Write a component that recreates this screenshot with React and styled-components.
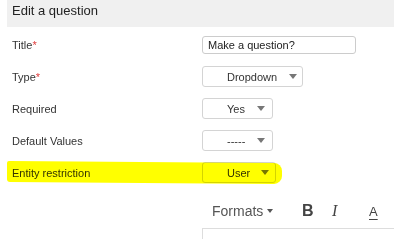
import React from 'react';
import styled, { createGlobalStyle } from 'styled-components';

const Global = createGlobalStyle`
  body {
    margin: 0;
    background: #fff;
    font-family: "Liberation Sans", Arial, sans-serif;
    color: #333;
  }
`;

const Page = styled.div`
  width: 394px;
  height: 239px;
  overflow: hidden;
  padding-left: 7px;
  box-sizing: border-box;
`;

const Header = styled.div`
  height: 27px;
  background: #f0f0f0;
  padding: 4px 5px 0;
  box-sizing: border-box;
  font-size: 13px;
  line-height: 14px;
  color: #222;
`;

const Form = styled.div`
  display: flex;
  flex-direction: column;
  gap: 11px;
  padding: 7px 0 0 5px;
`;

const Row = styled.div`
  position: relative;
  display: grid;
  grid-template-columns: 190px auto;
  align-items: center;
  height: 21px;
`;

const Label = styled.div`
  font-size: 11px;
  color: #333;
`;

const Req = styled.span`
  color: #e03b3b;
`;

const Input = styled.div`
  width: 154px;
  height: 18px;
  box-sizing: border-box;
  border: 1px solid #ccc;
  border-radius: 3px;
  padding: 0 5px;
  font-size: 11px;
  line-height: 16px;
  color: #222;
`;

const Select = styled.div`
  justify-self: start;
  display: inline-flex;
  align-items: center;
  width: ${p => p.w}px;
  height: 21px;
  box-sizing: border-box;
  border: 1px solid #d4d4d4;
  border-radius: 3px;
  padding-left: 24px;
  font-size: 11px;
  color: #333;
`;

const Arrow = styled.span`
  margin-left: ${p => p.gap || 12}px;
  width: 0;
  height: 0;
  border-left: 4px solid transparent;
  border-right: 4px solid transparent;
  border-top: 5px solid #777;
`;

const Highlight = styled.div`
  position: absolute;
  left: -5px;
  top: 0;
  width: 275px;
  height: 21px;
  background: #ffff00;
  mix-blend-mode: multiply;
  border-radius: 2px 8px 8px 3px;
  transform: skewY(0.4deg);
  pointer-events: none;
`;

const Toolbar = styled.div`
  display: flex;
  align-items: center;
  height: 30px;
  margin: 13px 0 0 195px;
  padding-left: 10px;
  color: #555;
`;

const Formats = styled.div`
  display: flex;
  align-items: center;
  font-size: 14px;
  gap: 4px;
  width: 90px;
`;

const Caret = styled.span`
  width: 0;
  height: 0;
  border-left: 3px solid transparent;
  border-right: 3px solid transparent;
  border-top: 4px solid #555;
`;

const Tool = styled.span`
  width: ${p => p.w}px;
  font-size: 16px;
  color: #444;
  font-weight: ${p => (p.bold ? 700 : 400)};
  font-style: ${p => (p.italic ? 'italic' : 'normal')};
  font-family: ${p => (p.serif ? '"Liberation Serif", serif' : '"Liberation Sans", Arial, sans-serif')};
  text-decoration: ${p => (p.under ? 'underline' : 'none')};
  text-underline-offset: 3px;
`;

const Editor = styled.div`
  margin: 2px 0 0 195px;
  height: 20px;
  border-top: 1px solid #ddd;
  border-left: 1px solid #ddd;
`;

const SelectField = ({ w, value, gap }) => (
  <Select w={w}>
    {value}
    <Arrow gap={gap} />
  </Select>
);

export default function App() {
  return (
    <Page>
      <Global />
      <Header>Edit a question</Header>
      <Form>
        <Row>
          <Label>Title<Req>*</Req></Label>
          <Input>Make a question?</Input>
        </Row>
        <Row>
          <Label>Type<Req>*</Req></Label>
          <SelectField w={101} value="Dropdown" />
        </Row>
        <Row>
          <Label>Required</Label>
          <SelectField w={71} value="Yes" />
        </Row>
        <Row>
          <Label>Default Values</Label>
          <SelectField w={71} value="-----" />
        </Row>
        <Row>
          <Label>Entity restriction</Label>
          <SelectField w={74} value="User" gap={11} />
          <Highlight />
        </Row>
      </Form>
      <Toolbar>
        <Formats>Formats <Caret /></Formats>
        <Tool bold w={30}>B</Tool>
        <Tool italic serif w={37}>I</Tool>
        <Tool under w={14} style={{ fontSize: 13 }}>A</Tool>
      </Toolbar>
      <Editor />
    </Page>
  );
}
